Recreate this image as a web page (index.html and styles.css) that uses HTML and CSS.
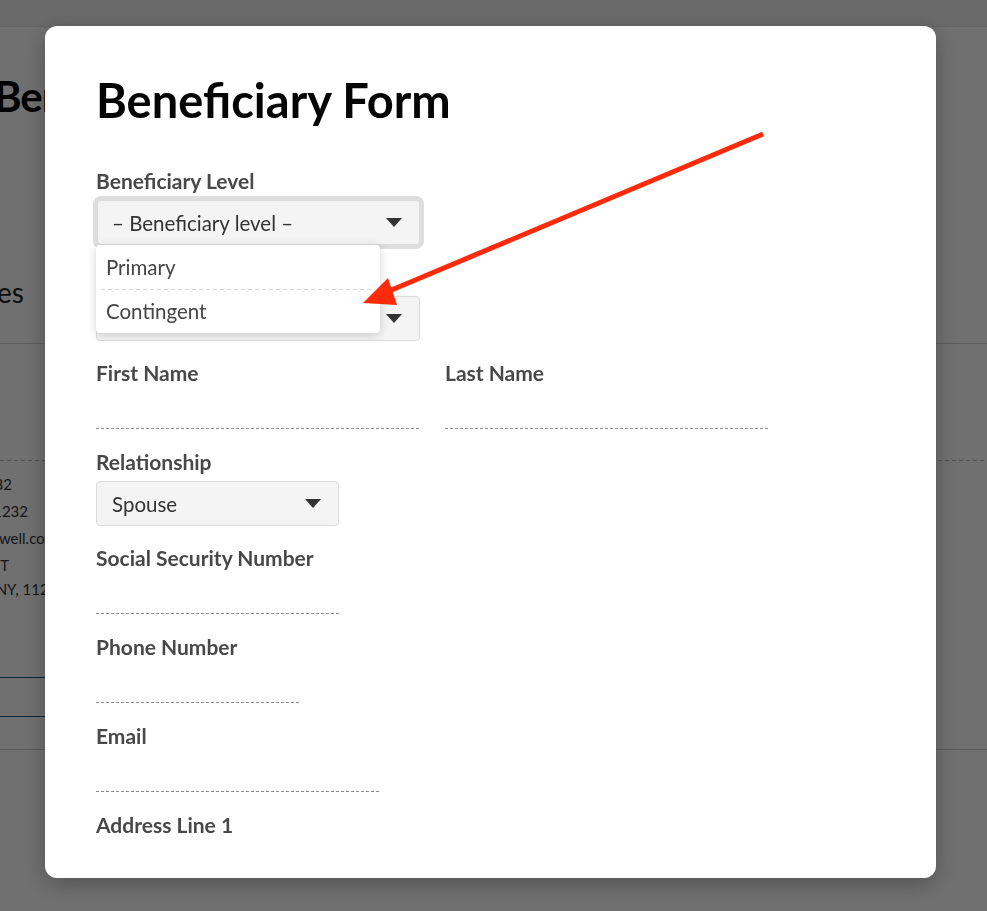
FILE: index.html
```html
<!DOCTYPE html>
<html lang="en">
<head>
<meta charset="utf-8">
<title>Beneficiary Form</title>
<link rel="stylesheet" href="styles.css">
</head>
<body>
<div class="page">
  <header class="topbar"></header>
  <main class="page-main">
    <h1 class="page-title">Beneficiaries</h1>
    <div class="tail sub-tail"><span class="page-sub">Contingent Beneficiaries</span></div>
    <div class="rule"></div>
    <div class="dash-rule"></div>
    <div class="contact">
      <div class="tail" style="width:12px"><span>(212) 555-1232</span></div>
      <div class="tail" style="width:28px"><span>(212) 555-1232</span></div>
      <div class="tail" style="width:57px"><span>jane.doe@maxwell.com</span></div>
      <div class="tail" style="width:9px"><span>123 MAIN ST</span></div>
      <div class="tail tight" style="width:66px"><span>BROOKLYN, NY, 11201</span></div>
    </div>
    <div class="blue-btn"></div>
    <div class="rule low"></div>
  </main>
</div>

<div class="overlay"></div>

<div class="modal">
  <h1 class="modal-title">Beneficiary Form</h1>

  <div class="field">
    <label class="label">Beneficiary Level</label>
    <div class="select-wrap">
      <div class="select focused"><span>– Beneficiary level –</span><i class="caret"></i></div>
      <ul class="menu">
        <li class="menu-item">Primary</li>
        <li class="menu-item">Contingent</li>
      </ul>
    </div>
  </div>

  <div class="field">
    <label class="label">Allocation Percentage</label>
    <div class="select"><span>100%</span><i class="caret"></i></div>
  </div>

  <div class="row">
    <div class="field text-field">
      <label class="label">First Name</label>
      <div class="input w324"></div>
    </div>
    <div class="field text-field">
      <label class="label">Last Name</label>
      <div class="input w325"></div>
    </div>
  </div>

  <div class="field">
    <label class="label">Relationship</label>
    <div class="select small"><span>Spouse</span><i class="caret"></i></div>
  </div>

  <div class="field text-field">
    <label class="label">Social Security Number</label>
    <div class="input w244"></div>
  </div>

  <div class="field text-field">
    <label class="label">Phone Number</label>
    <div class="input w204"></div>
  </div>

  <div class="field text-field">
    <label class="label">Email</label>
    <div class="input w284"></div>
  </div>

  <div class="field text-field">
    <label class="label">Address Line 1</label>
    <div class="input w324"></div>
  </div>
</div>

<svg class="annotation" width="987" height="911" viewBox="0 0 987 911" aria-hidden="true">
  <line x1="763" y1="134" x2="382" y2="294" stroke="#ff2a0a" stroke-width="5"/>
  <polygon points="363,303 388,278 397,305" fill="#ff2a0a"/>
</svg>
</body>
</html>
```

FILE: styles.css
```css
* { box-sizing: border-box; }

html, body {
  margin: 0;
  padding: 0;
  height: 100%;
}

body {
  font-family: "Lato", "Liberation Sans", sans-serif;
  background: #ffffff;
  overflow: hidden;
}

/* ---------- background page ---------- */
.page {
  width: 987px;
  height: 911px;
  overflow: hidden;
}

.topbar {
  height: 27px;
  background: #f0f0f0;
  border-bottom: 1px solid #e2e2e2;
}

.page-main {
  display: flex;
  flex-direction: column;
}

.page-title {
  margin: 42px 0 0 -6px;
  font-size: 42px;
  line-height: 54px;
  font-weight: 700;
  letter-spacing: -1px;
  color: #000;
  white-space: nowrap;
}

.tail {
  display: flex;
  justify-content: flex-end;
  white-space: nowrap;
}

.sub-tail {
  width: 24px;
  margin-top: 152px;
}

.page-sub {
  font-size: 28px;
  line-height: 34px;
  color: #222;
  font-weight: 400;
}

.rule {
  height: 1px;
  background: #d6d6d6;
  margin-top: 34px;
}

.dash-rule {
  height: 1px;
  margin-top: 116px;
  background-image: repeating-linear-gradient(to right, #bdbdbd 0 4px, transparent 4px 7px);
}

.contact {
  display: flex;
  flex-direction: column;
  margin-top: 10px;
  font-size: 15px;
  line-height: 27px;
  color: #333;
}

.contact .tight { line-height: 21px; }

.blue-btn {
  margin-top: 77px;
  height: 40px;
  border-top: 1px solid #1c5b86;
  border-bottom: 1px solid #1c5b86;
  width: 120px;
}

.rule.low {
  margin-top: 32px;
  background: #d0d0d0;
}

/* ---------- overlay ---------- */
.overlay {
  position: fixed;
  inset: 0;
  background: rgba(0, 0, 0, 0.56);
}

/* ---------- modal ---------- */
.modal {
  position: fixed;
  left: 45px;
  top: 26px;
  width: 891px;
  height: 852px;
  background: #fff;
  border-radius: 12px;
  box-shadow: 0 6px 24px rgba(0, 0, 0, 0.28);
  padding: 45px 51px 0;
  display: flex;
  flex-direction: column;
  overflow: hidden;
}

.modal-title {
  margin: 0 0 40px;
  font-size: 47px;
  line-height: 58px;
  font-weight: 700;
  color: #050505;
}

.field {
  display: flex;
  flex-direction: column;
  margin-bottom: 20px;
  align-items: flex-start;
}

.field.text-field {
  margin-bottom: 21px;
}

.row .field { margin-bottom: 21px; }

.label {
  display: block;
  font-size: 21px;
  line-height: 24px;
  font-weight: 700;
  color: #484848;
  margin-bottom: 7px;
}

.row {
  display: flex;
  gap: 25px;
}

.select-wrap {
  position: relative;
}

.select {
  width: 324px;
  height: 45px;
  background: #f4f4f4;
  border: 1px solid #dcdcdc;
  border-radius: 4px;
  display: flex;
  align-items: center;
  justify-content: space-between;
  padding: 0 17px 0 15px;
  font-size: 20.5px;
  color: #333;
}

.select.focused {
  margin-left: 1px;
  width: 323px;
  padding-left: 14px;
  box-shadow: 0 0 0 4px #dedede;
}

.select.small {
  width: 243px;
}

.caret {
  width: 0;
  height: 0;
  border-left: 8px solid transparent;
  border-right: 8px solid transparent;
  border-top: 9px solid #333;
}

.menu {
  position: absolute;
  left: 0;
  top: 45px;
  width: 284px;
  margin: 0;
  padding: 0;
  list-style: none;
  background: #fff;
  border-radius: 4px;
  box-shadow: 0 2px 10px rgba(0, 0, 0, 0.18);
  z-index: 2;
}

.menu-item {
  height: 44px;
  line-height: 44px;
  padding: 0 10px;
  font-size: 20.5px;
  color: #444;
  position: relative;
}

.menu-item + .menu-item::before {
  content: "";
  position: absolute;
  left: 5px;
  right: 5px;
  top: 0;
  height: 1px;
  background-image: repeating-linear-gradient(to right, #d8d8d8 0 4px, transparent 4px 7px);
}

.input {
  height: 37px;
  background-image: repeating-linear-gradient(to right, #8c8c8c 0 3px, transparent 3px 5px);
  background-size: 100% 1px;
  background-repeat: no-repeat;
  background-position: bottom left;
}

.w324 { width: 324px; }
.w325 { width: 325px; }
.w244 { width: 244px; }
.w204 { width: 204px; }
.w284 { width: 284px; }

/* ---------- annotation ---------- */
.annotation {
  position: fixed;
  left: 0;
  top: 0;
  pointer-events: none;
}
```
